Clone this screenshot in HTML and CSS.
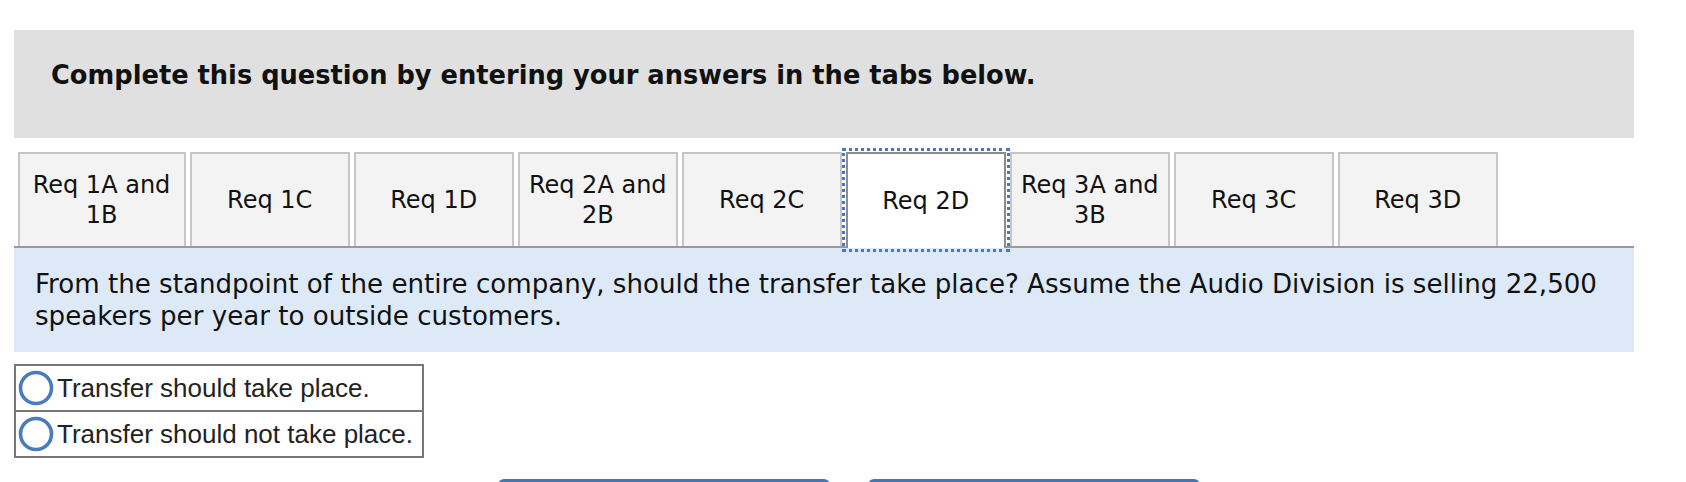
FILE: index.html
```html
<!DOCTYPE html>
<html lang="en">
<head>
<meta charset="utf-8">
<title>Req 2D</title>
<link rel="stylesheet" href="styles.css">
</head>
<body>
<div class="page">
  <div class="header">
    <h2 class="title">Complete this question by entering your answers in the tabs below.</h2>
  </div>
  <div class="tabs">
    <div class="tab tab-first">Req 1A and 1B</div>
    <div class="tab">Req 1C</div>
    <div class="tab">Req 1D</div>
    <div class="tab">Req 2A and 2B</div>
    <div class="tab">Req 2C</div>
    <div class="tab active">Req 2D</div>
    <div class="tab">Req 3A and 3B</div>
    <div class="tab">Req 3C</div>
    <div class="tab">Req 3D</div>
  </div>
  <div class="question">From the standpoint of the entire company, should the transfer take place? Assume the Audio Division is selling 22,500 speakers per year to outside customers.</div>
  <div class="options">
    <label class="option">
      <svg class="radio" viewBox="0 0 36 36" width="36" height="36"><circle cx="18" cy="18" r="15.5" fill="#fff" stroke="#4a7bbf" stroke-width="3.6"/></svg>
      <span>Transfer should take place.</span>
    </label>
    <label class="option">
      <svg class="radio" viewBox="0 0 36 36" width="36" height="36"><circle cx="18" cy="18" r="15.5" fill="#fff" stroke="#4a7bbf" stroke-width="3.6"/></svg>
      <span>Transfer should not take place.</span>
    </label>
  </div>
  <div class="nav">
    <button class="navbtn" aria-label="Previous: Req 2C"></button>
    <button class="navbtn" aria-label="Next: Req 3A and 3B"></button>
  </div>
</div>
</body>
</html>
```
FILE: styles.css
```css
html, body {
  margin: 0;
  background: #ffffff;
}
body {
  font-family: "DejaVu Sans", Verdana, sans-serif;
  color: #111111;
  overflow: hidden;
}
.page {
  padding: 30px 0 0 14px;
  width: 1620px;
}
.header {
  background: #e0e0e0;
  height: 108px;
  box-sizing: border-box;
  padding: 30px 37px 0;
}
.title {
  margin: 0;
  font-size: 25.7px;
  line-height: 30px;
  font-weight: bold;
  color: #111111;
}
.tabs {
  display: flex;
  align-items: flex-end;
  gap: 4.5px;
  margin-top: 14px;
  padding-left: 3.5px;
  height: 94px;
}
.tab {
  box-sizing: border-box;
  width: 159.5px;
  height: 94px;
  flex: none;
  border: 2px solid #c6c6c6;
  border-bottom: 0;
  background: #f3f3f3;
  display: flex;
  align-items: center;
  justify-content: center;
  text-align: center;
  padding: 0 8px;
  font-size: 24px;
  line-height: 30px;
  color: #111111;
}
.tab-first {
  width: 168px;
}
.tab.active {
  background: #ffffff;
  border-color: #8c8c8c;
  height: 96px;
  margin-bottom: -2px;
  outline: 3px dotted #4677c0;
  outline-offset: 1px;
  position: relative;
  z-index: 1;
}
.question {
  background: #dde9f7;
  border-top: 2px solid #9a9a9a;
  padding: 20px 21px;
  font-size: 26.1px;
  line-height: 32px;
  color: #111111;
}
.options {
  display: flex;
  flex-direction: column;
  width: max-content;
  margin-top: 12px;
  border: 2px solid #777777;
  font-family: "Liberation Sans", Arial, sans-serif;
  font-size: 26px;
  color: #222222;
}
.option {
  display: flex;
  align-items: center;
  gap: 3px;
  height: 44px;
  padding: 0 9px 0 2px;
}
.option + .option {
  border-top: 2px solid #777777;
}
.radio {
  flex: none;
  display: block;
}
.nav {
  display: flex;
  gap: 38px;
  margin-top: 21px;
  padding-left: 484px;
}
.navbtn {
  width: 332px;
  height: 50px;
  border: 0;
  border-radius: 6px 6px 0 0;
  background: #4675b3;
  padding: 0;
}
```
